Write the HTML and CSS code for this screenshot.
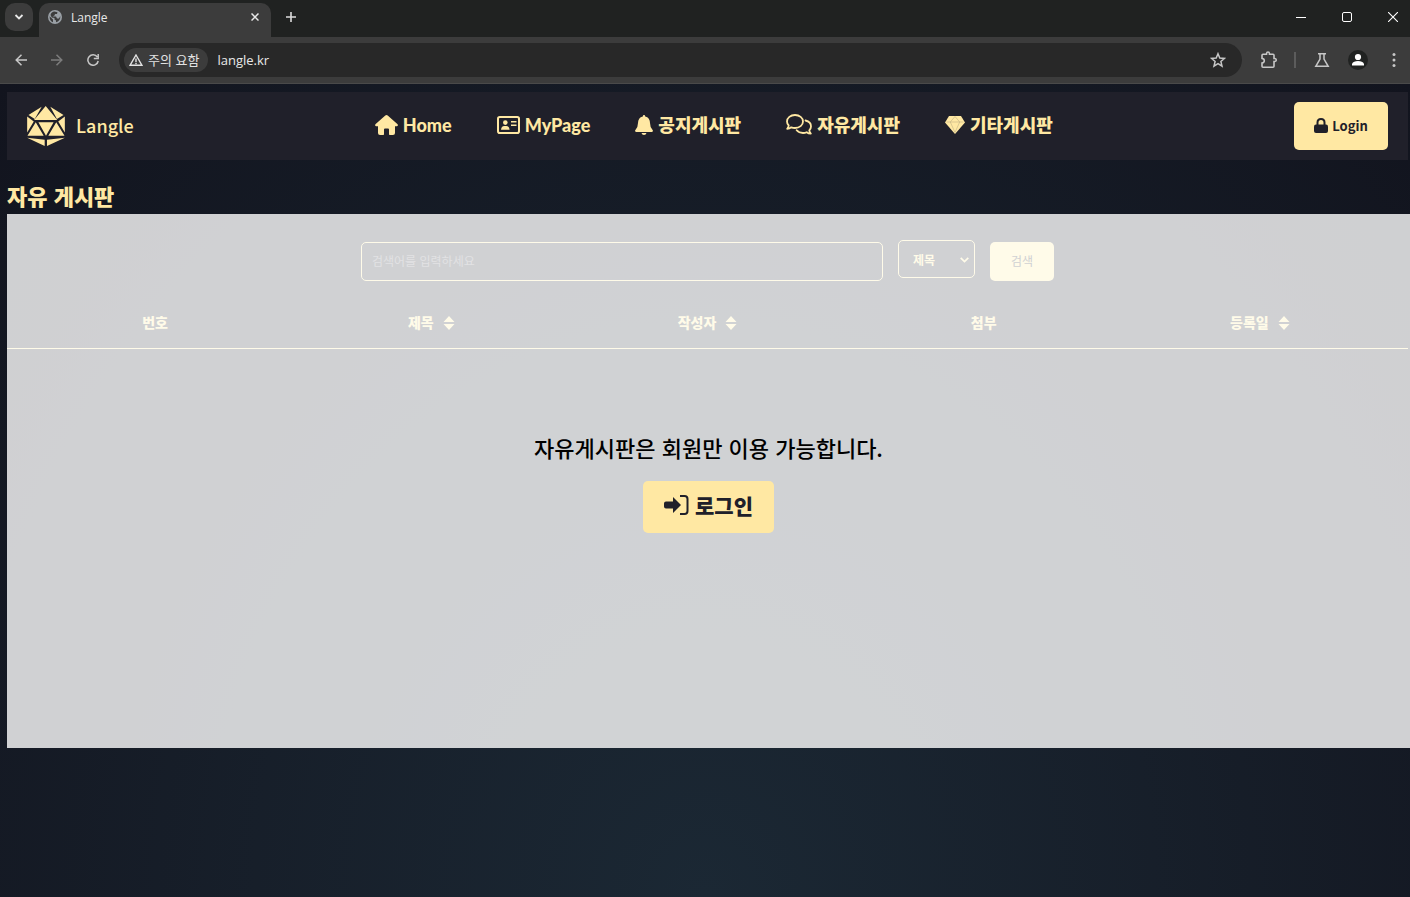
FILE: index.html
```html
<!DOCTYPE html>
<html lang="ko">
<head>
<meta charset="UTF-8">
<meta name="viewport" content="width=device-width, initial-scale=1">
<title>Langle</title>
<link rel="stylesheet" href="styles.css">
</head>
<body>

<!-- browser window -->
<div class="tabstrip">
	<button class="tab-search" type="button" aria-label="Search tabs">
		<svg width="10" height="10" viewBox="0 0 10 10"><path d="M1.5 3 5 6.5 8.5 3" fill="none" stroke="#e8e8e8" stroke-width="1.8"/></svg>
	</button>
	<div class="tab">
		<svg width="14" height="14" viewBox="0 0 14 14"><circle cx="7" cy="7" r="7" fill="#9aa0a6"/><path d="M1.6 6.2 5 9.6v2.6C2.8 11.4 1.5 9.4 1.6 6.2ZM6.5 1.6 9.5 2.3 9 4H7L6.5 5.5 4.500 6.500H8L9 8.500H11L12.300 6C12.600 9 11 11.500 8 12.300L8 10.500 6.500 9.500V8L3.800 7.500 2.500 5C3 3 4.500 1.800 6.500 1.600Z" fill="#3c3c3c"/></svg>
		<span class="tab-title">Langle</span>
		<button class="tab-close" type="button" aria-label="Close tab">
			<svg width="8" height="8" viewBox="0 0 8 8"><path d="M.5.5l7 7M7.500.5l-7 7" stroke="#e8e8e8" stroke-width="1.5"/></svg>
		</button>
	</div>
	<button class="tab-new" type="button" aria-label="New tab">
		<svg width="10" height="10" viewBox="0 0 10 10"><path d="M5 0v10M0 5h10" stroke="#dcdcdc" stroke-width="1.600"/></svg>
	</button>
	<div class="win-buttons">
		<button type="button" aria-label="Minimize"><svg width="10" height="10" viewBox="0 0 10 10"><path d="M0 5.500h10" stroke="#fff"/></svg></button>
		<button type="button" aria-label="Maximize"><svg width="10" height="10" viewBox="0 0 10 10"><rect x=".5" y=".5" width="9" height="9" rx="1.500" fill="none" stroke="#fff"/></svg></button>
		<button type="button" class="last" aria-label="Close"><svg width="10" height="10" viewBox="0 0 10 10"><path d="M0 0l10 10M10 0 0 10" stroke="#fff" stroke-width="1.100"/></svg></button>
	</div>
</div>

<div class="toolbar">
	<button class="tool" type="button" aria-label="Back"><svg width="12" height="12" viewBox="0 0 12 12"><path d="M12 6H1M6.500.7 1.200 6l5.300 5.300" fill="none" stroke="#c7c7c7" stroke-width="1.500"/></svg></button>
	<button class="tool" type="button" aria-label="Forward"><svg width="12" height="12" viewBox="0 0 12 12"><path d="M0 6h11M5.500.7 10.800 6l-5.300 5.300" fill="none" stroke="#7c7c7c" stroke-width="1.500"/></svg></button>
	<button class="tool" type="button" aria-label="Reload"><svg width="12" height="12" viewBox="0 0 12 12"><path d="M10.300 3A5.200 5.200 0 1 0 11.200 7M11.200 0v4.600H6.800" fill="none" stroke="#c7c7c7" stroke-width="1.500"/></svg></button>
	<div class="address">
		<button class="chip" type="button">
			<svg width="14" height="12" viewBox="0 0 14 12"><path d="M7 1 13 11.300H1Z" fill="none" stroke="#e3e3e3" stroke-width="1.400"/><path d="M7 4.500v3.500M7 8.800v1.400" stroke="#e3e3e3" stroke-width="1.400"/></svg>
			주의 요함
		</button>
		<input class="url" type="text" value="langle.kr" aria-label="Address">
		<button class="star" type="button" aria-label="Bookmark"><svg width="16" height="16" viewBox="0 0 16 16"><path d="M8 1.700 9.800 6l4.700.4-3.600 3.100 1.100 4.600L8 11.700l-4 2.400 1.100-4.600L1.500 6.400 6.200 6Z" fill="none" stroke="#c7c7c7" stroke-width="1.500"/></svg></button>
	</div>
	<div class="tools-right">
		<button type="button" aria-label="Extensions"><svg width="18" height="18" viewBox="0 0 18 18"><path d="M2 4.200q0-1 1-1H6.500V2.500q.2-1.500 1.500-1.500t1.500 1.500v.7H13q1 0 1 1v3.300h.8q1.500.2 1.500 1.500T14.800 10.500H14v4.800q0 1-1 1H3q-1 0-1-1V12q2.300-.5 2.300-2.300T2 7.400Z" fill="none" stroke="#c7c7c7" stroke-width="1.600"/></svg></button>
		<span class="divider"></span>
		<button type="button" aria-label="Labs"><svg width="16" height="16" viewBox="0 0 16 16"><path d="M4 1.700h8M6 2v5L1.800 14.300h12.400L10 7V2" fill="none" stroke="#c7c7c7" stroke-width="1.500"/></svg></button>
		<button type="button" aria-label="Profile"><svg width="20" height="20" viewBox="0 0 20 20"><circle cx="10" cy="10" r="10" fill="#202221"/><circle cx="10" cy="7" r="3.100" fill="#fff"/><path d="M4 15.500v-1.700q1.500-2.700 6-2.700t6 2.700v1.700Z" fill="#fff"/></svg></button>
		<button type="button" aria-label="Menu"><svg width="4" height="14" viewBox="0 0 4 14"><g fill="#c7c7c7"><circle cx="2" cy="1.600" r="1.500"/><circle cx="2" cy="7" r="1.500"/><circle cx="2" cy="12.400" r="1.500"/></g></svg></button>
	</div>
</div>

<!-- site -->
<div class="page">
	<nav class="navbar">
		<a class="brand" href="#">
			<svg width="38" height="40" viewBox="0 0 114 121"><path d="M56 0 21 42H91ZM44 2 4 27 23 39ZM70 2 110 27 90 39ZM0 32V80L20 47ZM114 32V80L94 47ZM26 49 1 90H50ZM88 49 64 90H113ZM34 49H80L57 90ZM0 96 53 102V121ZM114 96 60 102V121Z" fill="#ffe8a3"/></svg>
			<span>Langle</span>
		</a>
		<ul class="menu">
			<li><a href="#"><svg width="23" height="20" viewBox="0 0 23 20"><path d="M11.500 0q.6 0 1.200.5L22.600 9.300q.8 1.700-.9 1.900H20V18q0 2-2 2h-3.300q-.7 0-.7-.8V14.500q0-1-1-1h-3q-1 0-1 1v4.700q0 .8-.7.8H5q-2 0-2-2v-6.800H1.300Q-.4 11 .4 9.300L10.300.5Q10.900 0 11.500 0Z"/></svg>Home</a></li>
			<li><a href="#"><svg width="23" height="18" viewBox="0 0 23 18"><rect x="1" y="1" width="21" height="16" rx="1.800" fill="none" stroke="#ffe8a3" stroke-width="2"/><circle cx="8.300" cy="6.600" r="2.300"/><path d="M4 13.800q.3-3.800 3.300-3.800h2q3 0 3.300 3.800ZM14 5h5.500v1.500H14ZM14 8.500h5.500V10H14Z"/></svg>MyPage</a></li>
			<li><a href="#"><svg width="18" height="20" viewBox="0 0 18 20"><path d="M9 0q1.200 0 1.200 1.400Q15 2.500 15 8q0 4.300 2.600 7 1 1.700-.7 2H1.100q-1.700-.3-.7-2Q3 12.300 3 8q0-5.500 4.800-6.600Q7.800 0 9 0ZM6.500 18h5Q11 20 9 20T6.500 18Z"/></svg>공지게시판</a></li>
			<li><a href="#"><svg width="26" height="21" viewBox="0 0 26 21"><path d="M9 1C13.500 1 17 3.900 17 7.500S13.500 14 9 14Q7 14 5.300 13.300 3.500 14.800 1.200 14.800 2.500 13.300 2.700 11.500 1 9.800 1 7.500C1 3.900 4.500 1 9 1ZM19.500 6.500C22.800 7.200 25 9.500 25 12.500q0 2-1.700 3.800.2 1.800 1.500 3.300-2.400 0-4.100-1.400Q19 19 17 19 12.800 19 10.700 16.300" fill="none" stroke="#ffe8a3" stroke-width="1.800" stroke-linejoin="round" stroke-linecap="round"/></svg>자유게시판</a></li>
			<li><a href="#"><svg width="20" height="18" viewBox="0 0 20 18"><path d="M4 0H16L20 6.500 10 18 0 6.500Z"/><path d="M10 .5 5.300 6 10 16.500 14.700 6ZM1.500 6H18.500" fill="none" stroke="#b5a67c" stroke-width=".5"/></svg>기타게시판</a></li>
		</ul>
		<button class="login" type="button"><svg width="14" height="15" viewBox="0 0 14 15"><path d="M3.500 7V4.500Q3.500 1 7 1t3.500 3.500V7" fill="none" stroke="#20202a" stroke-width="2"/><rect y="6.500" width="14" height="8.500" rx="2" fill="#20202a"/></svg>Login</button>
	</nav>

	<h1 class="board-title">자유 게시판</h1>

	<main class="board">
		<form class="search">
			<input class="keyword" type="text" placeholder="검색어를 입력하세요" aria-label="검색어">
			<div class="select-wrap">
				<select aria-label="검색 조건">
					<option>제목</option>
					<option>작성자</option>
				</select>
				<svg width="9" height="6" viewBox="0 0 9 6"><path d="M.7.8 4.500 4.600 8.300.8" fill="none" stroke="#fffbe9" stroke-width="1.700"/></svg>
			</div>
			<button type="button">검색</button>
		</form>
		<div class="list">
			<table>
				<thead>
					<tr>
						<th>번호</th>
						<th>제목<svg class="sort" width="12" height="14" viewBox="0 0 12 14"><path d="M6 0 11.500 6H.5ZM.5 8h11L6 14Z"/></svg></th>
						<th>작성자<svg class="sort" width="12" height="14" viewBox="0 0 12 14"><path d="M6 0 11.500 6H.5ZM.5 8h11L6 14Z"/></svg></th>
						<th>첨부</th>
						<th>등록일<svg class="sort" width="12" height="14" viewBox="0 0 12 14"><path d="M6 0 11.500 6H.5ZM.5 8h11L6 14Z"/></svg></th>
					</tr>
				</thead>
			</table>
		</div>
		<div class="notice">
			<p>자유게시판은 회원만 이용 가능합니다.</p>
			<button type="button"><svg width="25" height="20" viewBox="0 0 25 20"><path d="M9 2 17 10 9 18V13.500H2Q0 13.500 0 11.500V8.500Q0 6.500 2 6.500H9Z" fill="#20202a"/><path d="M16 1h4.500Q23.500 1 23.500 4V16q0 3-3 3H16" fill="none" stroke="#20202a" stroke-width="2"/></svg>로그인</button>
		</div>
	</main>
</div>

</body>
</html>
```
FILE: styles.css
```css
* {
	box-sizing: border-box;
}

html,
body {
	margin: 0;
	min-height: 100%;
}

body {
	display: flex;
	flex-direction: column;
	min-height: 100vh;
	font-family: "Noto Sans CJK KR", sans-serif;
	background: #12141e;
}

button,
input,
select {
	font-family: inherit;
	margin: 0;
	border: 0;
	padding: 0;
	background: none;
}

button {
	display: flex;
	align-items: center;
	justify-content: center;
	cursor: pointer;
}

svg {
	display: block;
	flex: none;
}

a {
	color: inherit;
	text-decoration: none;
}

/* browser window */
.tabstrip {
	display: flex;
	height: 37px;
	padding: 3px 0 0 5px;
	background: #202221;
}

.tab-search {
	width: 28px;
	height: 28px;
	margin-right: 6px;
	border-radius: 10px;
	background: #3c3c3c;
}

.tab {
	display: flex;
	align-items: center;
	width: 232px;
	padding: 0 12px 6px 9px;
	border-radius: 10px 10px 0 0;
	background: #3c3c3c;
}

.tab-title {
	flex: 1;
	margin-left: 9px;
	padding-top: 2px;
	font: 12px/16px "Open Sans", sans-serif;
	color: #e8e8e8;
}

.tab-new {
	width: 28px;
	height: 28px;
	margin-left: 6px;
}

.win-buttons {
	display: flex;
	margin-left: auto;
}

.win-buttons button {
	width: 46px;
	height: 28px;
}

.win-buttons .last {
	width: 40px;
	padding-left: 6px;
}

.toolbar {
	display: flex;
	align-items: center;
	height: 47px;
	padding-left: 3px;
	background: #3c3c3c;
	border-bottom: 1px solid #4a4a4a;
}

.tool {
	width: 36px;
	height: 34px;
}

.address {
	display: flex;
	flex: 1;
	align-items: center;
	height: 34px;
	margin: 0 11px 0 8px;
	padding: 0 16px 0 5px;
	border-radius: 17px;
	background: #282828;
}

.chip {
	gap: 5px;
	height: 24px;
	padding: 0 9px 0 5px;
	border-radius: 12px;
	font-size: 13px;
	line-height: 22px;
	color: #e3e3e3;
	background: #3c3c3c;
}

.url {
	flex: 1;
	margin-left: 9px;
	font: 13px/20px "Open Sans", sans-serif;
	color: #e8e8e8;
}

.tools-right {
	display: flex;
	align-items: center;
	gap: 4px;
}

.tools-right button {
	width: 32px;
	height: 34px;
}

.divider {
	width: 2px;
	height: 16px;
	margin: 0 6px 0 5px;
	background: #5c5c5c;
}

/* site */
.page {
	flex: 1;
	padding: 8px 0 8px 7px;
	color: #ffe8a3;
	background: radial-gradient(ellipse at bottom, #1b2834 0%, #12141e 100%);
}

.navbar {
	display: flex;
	align-items: center;
	justify-content: space-between;
	height: 68px;
	margin-right: 2px;
	padding: 0 20px;
	background: #20202a;
}

.brand {
	display: flex;
	align-items: center;
	gap: 11px;
	font-size: 18px;
	font-weight: 500;
}

.brand span {
	padding-bottom: 2px;
}

.menu {
	display: flex;
	gap: 45px;
	margin: 0;
	padding: 0 0 3px;
	list-style: none;
}

.menu a {
	display: flex;
	align-items: center;
	gap: 5px;
	font-family: Lato, "Noto Sans CJK KR", sans-serif;
	font-size: 18px;
	font-weight: 900;
	line-height: 24px;
}

.menu svg {
	fill: #ffe8a3;
}

.login {
	gap: 4px;
	width: 94px;
	height: 48px;
	padding-bottom: 2px;
	border-radius: 5px;
	font-size: 13px;
	font-weight: 700;
	color: #20202a;
	background: #ffe8a3;
}

.board-title {
	margin: 22px 0 6px;
	font-size: 22px;
	font-weight: 900;
	line-height: 26px;
}

.board {
	min-height: 534px;
	padding-top: 26px;
	background: rgba(255, 255, 255, 0.8);
}

.search {
	display: flex;
	align-items: flex-start;
	justify-content: center;
	gap: 15px;
	margin-right: 2px;
	color: #fffbe9;
}

.keyword {
	flex: 0 1 522px;
	min-width: 0;
	height: 39px;
	margin-top: 2px;
	padding: 0 10px 2px;
	border: 1px solid #fffbe9;
	border-radius: 5px;
	font-size: 12px;
}

.keyword::placeholder {
	color: #e2e2e4;
	opacity: 1;
}

.select-wrap {
	position: relative;
}

.select-wrap select {
	appearance: none;
	display: block;
	width: 77px;
	height: 38px;
	padding: 0 14px;
	border: 1px solid #fffbe9;
	border-radius: 5px;
	font-size: 12px;
	font-weight: 700;
	color: #fffbe9;
}

.select-wrap svg {
	position: absolute;
	top: 17px;
	right: 6px;
	pointer-events: none;
}

.search button {
	width: 64px;
	height: 39px;
	margin-top: 2px;
	padding-bottom: 2px;
	border-radius: 5px;
	font-size: 12px;
	color: #d0d1d3;
	background: #fffbe9;
}

.list {
	margin: 17px 2px 0 0;
	padding: 0 10px;
	border-bottom: 1px solid #fffbe9;
}

.list table {
	width: 100%;
	table-layout: fixed;
	border-collapse: collapse;
}

.list th {
	height: 50px;
	padding: 0 0 2px;
	font-size: 14px;
	font-weight: 900;
	line-height: 20px;
	color: #fffbe9;
}

.sort {
	display: inline-block;
	margin-left: 9px;
	vertical-align: -2px;
	fill: #fffbe9;
}

.notice {
	display: flex;
	flex-direction: column;
	align-items: center;
	padding-top: 83px;
}

.notice p {
	margin: 0 0 19px;
	font-size: 22px;
	font-weight: 500;
	line-height: 30px;
	color: #000;
}

.notice button {
	gap: 6px;
	height: 52px;
	padding: 0 21px 5px;
	border-radius: 5px;
	font-size: 21px;
	font-weight: 900;
	color: #20202a;
	background: #ffe8a3;
}
```
